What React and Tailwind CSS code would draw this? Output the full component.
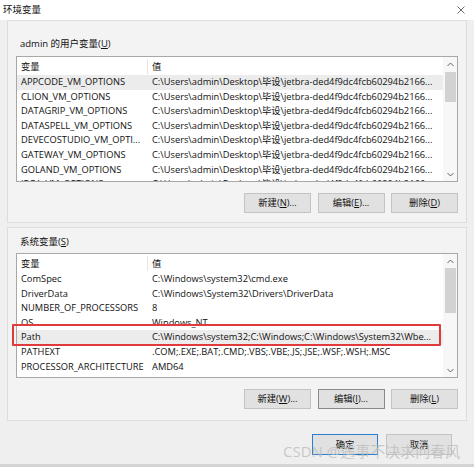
import React from "react";

const jb = "C:\\Users\\admin\\Desktop\\毕设\\jetbra-ded4f9dc4fcb60294b2166...";

const userVars = [
  ["APPCODE_VM_OPTIONS", jb],
  ["CLION_VM_OPTIONS", jb],
  ["DATAGRIP_VM_OPTIONS", jb],
  ["DATASPELL_VM_OPTIONS", jb],
  ["DEVECOSTUDIO_VM_OPTI...", jb],
  ["GATEWAY_VM_OPTIONS", jb],
  ["GOLAND_VM_OPTIONS", jb],
  ["IDEA_VM_OPTIONS", jb],
];

const sysVars = [
  ["ComSpec", "C:\\Windows\\system32\\cmd.exe"],
  ["DriverData", "C:\\Windows\\System32\\Drivers\\DriverData"],
  ["NUMBER_OF_PROCESSORS", "8"],
  ["OS", "Windows_NT"],
  ["Path", "C:\\Windows\\system32;C:\\Windows;C:\\Windows\\System32\\Wbe..."],
  ["PATHEXT", ".COM;.EXE;.BAT;.CMD;.VBS;.VBE;.JS;.JSE;.WSF;.WSH;.MSC"],
  ["PROCESSOR_ARCHITECTURE", "AMD64"],
  ["PROCESSOR_IDENTIFIER", "Intel64 Family 6 Model 158 Stepping 10, GenuineIntel"],
];

function Chevron({ up }) {
  return (
    <svg width="7" height="5" viewBox="0 0 7 5" className="block">
      <path d={up ? "M0.5 4 L3.5 1 L6.5 4" : "M0.5 1 L3.5 4 L6.5 1"} fill="none" stroke="#606060" strokeWidth="1" />
    </svg>
  );
}

function VarList({ rows, selected, thumbTop, thumbHeight, height }) {
  return (
    <div className={`flex border border-[#a8a8a8] bg-white overflow-hidden ${height}`}>
      <div className="flex-1 min-w-0 flex flex-col">
        <div className="flex h-[18px] shrink-0 items-end pb-[1px]">
          <div className="w-[131px] pl-[4px] border-r border-[#e5e5e5] h-[15px] leading-[15px]">变量</div>
          <div className="pl-[4px] h-[15px] leading-[15px]">值</div>
        </div>
        {rows.map(([k, v], i) => (
          <div key={k} className={`flex h-[14.6px] shrink-0 leading-[14.6px] ${i === selected ? "bg-[#ececec]" : ""}`}>
            <div className="w-[131px] shrink-0 pl-[4px] whitespace-nowrap overflow-hidden">{k}</div>
            <div className="pl-[4px] whitespace-nowrap overflow-hidden">{v}</div>
          </div>
        ))}
      </div>
      <div className="w-[14px] shrink-0 flex flex-col items-center bg-[#f7f7f7]">
        <div className="h-[12px] flex items-center justify-center pt-[2px]"><Chevron up /></div>
        <div className={`w-[11px] bg-[#d2d2d2] ${thumbTop} ${thumbHeight}`} />
        <div className="flex-1" />
        <div className="h-[12px] flex items-center justify-center pb-[2px]"><Chevron /></div>
      </div>
    </div>
  );
}

function Btn({ children, focus }) {
  return (
    <div
      className={`w-[67px] h-[20px] flex items-center justify-center bg-[#e1e1e1] border ${
        focus ? "border-[#8a8a8a]" : "border-[#c4c4c4]"
      }`}
    >
      {children}
    </div>
  );
}

export default function App() {
  return (
    <div
      className="relative w-[474px] h-[467px] bg-[#efefef] flex flex-col text-[9.3px] text-[#111] overflow-hidden"
      style={{ fontFamily: '"Open Sans","Noto Sans CJK SC",sans-serif' }}
    >
      {/* title bar */}
      <div className="h-[20px] shrink-0 bg-white flex items-center justify-between pl-[3px] pr-[9px]">
        <span className="text-[9.5px]">环境变量</span>
        <svg width="8" height="8" viewBox="0 0 8 8">
          <path d="M0.5 0.5 L7.5 7.5 M7.5 0.5 L0.5 7.5" stroke="#444" strokeWidth="0.8" />
        </svg>
      </div>

      {/* user vars */}
      <div className="mx-[7px] border border-[#dddddd] bg-[#f3f3f3] pl-[8px] pr-[8px] pt-[17px] pb-[9px] flex flex-col">
        <div className="pl-[4px] text-[9.5px] h-[12px] leading-[12px] mb-[6px]">
          admin 的用户变量(<u>U</u>)
        </div>
        <VarList rows={userVars} selected={0} thumbTop="mt-[3px]" thumbHeight="h-[30px]" height="h-[126px]" />
        <div className="flex justify-end gap-[6.5px] mt-[11px]">
          <Btn>新建(<u>N</u>)...</Btn>
          <Btn>编辑(<u>E</u>)...</Btn>
          <Btn>删除(<u>D</u>)</Btn>
        </div>
      </div>

      {/* system vars */}
      <div className="mx-[7px] mt-[4px] border border-[#dddddd] bg-[#f3f3f3] pl-[8px] pr-[8px] pt-[8px] pb-[11px] flex flex-col">
        <div className="pl-[4px] text-[9.5px] h-[12px] leading-[12px] mb-[5px]">
          系统变量(<u>S</u>)
        </div>
        <VarList rows={sysVars} selected={4} thumbTop="mt-[2px]" thumbHeight="h-[45px]" height="h-[125px]" />
        <div className="flex justify-end gap-[6.5px] mt-[11px]">
          <Btn>新建(<u>W</u>)...</Btn>
          <Btn focus>编辑(<u>I</u>)...</Btn>
          <Btn>删除(<u>L</u>)</Btn>
        </div>
      </div>

      {/* ok / cancel */}
      <div className="flex justify-end gap-[8px] pr-[22px] mt-[13px]">
        <div className="w-[66px] h-[21px] flex items-center justify-center bg-[#e1e1e1] border-[1.5px] border-[#2b7fd0]">确定</div>
        <div className="w-[66px] h-[21px] flex items-center justify-center bg-[#e1e1e1] border border-[#c4c4c4]">取消</div>
      </div>
      <div className="flex-1" />
      <div className="h-[3px] bg-[#d4d4d4]" />

      {/* red annotation around Path row */}
      <div className="absolute left-[12px] top-[324px] w-[429px] h-[22px] border-2 border-[#e03a3a] rounded-[1px]" />

      {/* watermark */}
      <div className="absolute left-[283px] top-[442px] text-[15px] leading-[18px] text-[#bdbdbd]/80 whitespace-nowrap">
        CSDN @遇事不决求问春风
      </div>
    </div>
  );
}
